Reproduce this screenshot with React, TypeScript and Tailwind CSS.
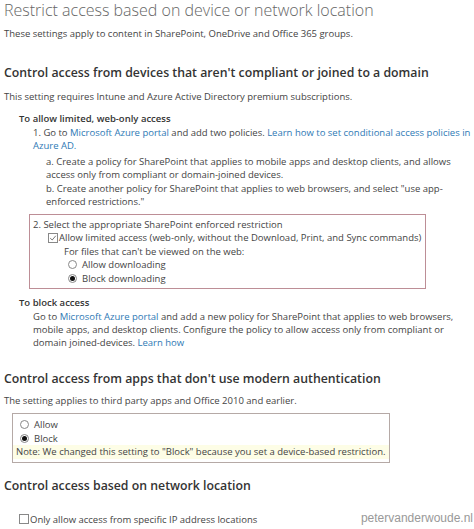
const Link = ({ children }: { children: React.ReactNode }) => (
  <span className="text-[#2e79b5]">{children}</span>
);

const Radio = ({ checked }: { checked?: boolean }) => (
  <span className="inline-flex w-[9px] h-[9px] rounded-full border border-[#888] bg-white items-center justify-center shrink-0">
    {checked ? <span className="w-[5px] h-[5px] rounded-full bg-[#111]" /> : null}
  </span>
);

const Checkbox = ({ checked }: { checked?: boolean }) => (
  <span className="inline-flex w-[10px] h-[10px] border border-[#888] bg-white items-center justify-center shrink-0">
    {checked ? (
      <svg viewBox="0 0 10 10" className="w-[8px] h-[8px]">
        <path d="M1.5 5.2 L4 7.5 L8.5 2.2" fill="none" stroke="#555" strokeWidth="1" />
      </svg>
    ) : null}
  </span>
);

const Heading = ({ children, className }: { children: React.ReactNode; className?: string }) => (
  <h2 className={`text-[12.3px] font-semibold leading-[18px] text-[#333] whitespace-nowrap ${className || ""}`}>
    {children}
  </h2>
);

export default function App() {
  return (
    <div className="relative w-[474px] h-[529px] overflow-hidden bg-white text-[#444] font-['Open_Sans',sans-serif] text-[9.5px] leading-[13.5px]">
      <div className="pl-1">
        <h1 className="text-[16px] font-light leading-[21px] text-[#666] whitespace-nowrap">
          Restrict access based on device or network location
        </h1>
        <p className="mt-[6px]">These settings apply to content in SharePoint, OneDrive and Office 365 groups.</p>

        <Heading className="mt-[23px]">Control access from devices that aren't compliant or joined to a domain</Heading>
        <p className="mt-[8px]">This setting requires Intune and Azure Active Directory premium subscriptions.</p>

        <div className="mt-[9px] pl-[15px]">
          <div className="font-semibold text-[#333]">To allow limited, web-only access</div>
          <div className="pl-[14px]">
            <p>
              1. Go to <Link>Microsoft Azure portal</Link> and add two policies.{" "}
              <Link>Learn how to set conditional access policies in Azure AD.</Link>
            </p>
            <div className="mt-[2px] pl-[13px] leading-[13px]">
              <p className="pr-[20px]">
                a. Create a policy for SharePoint that applies to mobile apps and desktop clients, and allows access
                only from compliant or domain-joined devices.
              </p>
              <p className="mt-[1px]">
                b. Create another policy for SharePoint that applies to web browsers, and select "use app-enforced
                restrictions."
              </p>
            </div>
          </div>
          <div className="mt-[6px] ml-[10px] w-[397px] border border-[#bd8e96] pt-[3px] pb-[3px] pl-[3px]">
            <p>2. Select the appropriate SharePoint enforced restriction</p>
            <div className="pl-[15px]">
              <div className="flex items-center gap-[1px]">
                <Checkbox checked />
                <span>Allow limited access (web-only, without the Download, Print, and Sync commands)</span>
              </div>
              <div className="pl-[16px]">
                <p>For files that can't be viewed on the web:</p>
                <div className="pl-[4px]">
                  <div className="flex items-center gap-[5px]">
                    <Radio />
                    <span>Allow downloading</span>
                  </div>
                  <div className="flex items-center gap-[5px]">
                    <Radio checked />
                    <span>Block downloading</span>
                  </div>
                </div>
              </div>
            </div>
          </div>
          <div className="mt-[7px] font-semibold text-[#333]">To block access</div>
          <p className="pl-[14px] leading-[13px] pr-[20px]">
            Go to <Link>Microsoft Azure portal</Link> and add a new policy for SharePoint that applies to web browsers,
            mobile apps, and desktop clients. Configure the policy to allow access only from compliant or domain
            joined-devices. <Link>Learn how</Link>
          </p>
        </div>

        <Heading className="mt-[21px]">Control access from apps that don't use modern authentication</Heading>
        <p className="mt-[6px]">The setting applies to third party apps and Office 2010 and earlier.</p>
        <div className="mt-[6px] ml-[8px] w-[378px] border border-[#b5a9a6] pt-[4px] pb-[3px]">
          <div className="pl-[7px]">
            <div className="flex items-center gap-[5px]">
              <Radio />
              <span>Allow</span>
            </div>
            <div className="flex items-center gap-[5px]">
              <Radio checked />
              <span>Block</span>
            </div>
          </div>
          <p className="pl-[3px] bg-[#fdfde6]">
            Note: We changed this setting to "Block" because you set a device-based restriction.
          </p>
        </div>

        <Heading className="mt-[14px]">Control access based on network location</Heading>
        <div className="mt-[18px] pl-[15px] flex items-center gap-[1px]">
          <Checkbox />
          <span>Only allow access from specific IP address locations</span>
        </div>
      </div>
      <div className="absolute right-[1px] bottom-[4px] text-[12px] font-light text-[#999] font-['Liberation_Sans',sans-serif]">
        petervanderwoude.nl
      </div>
    </div>
  );
}
